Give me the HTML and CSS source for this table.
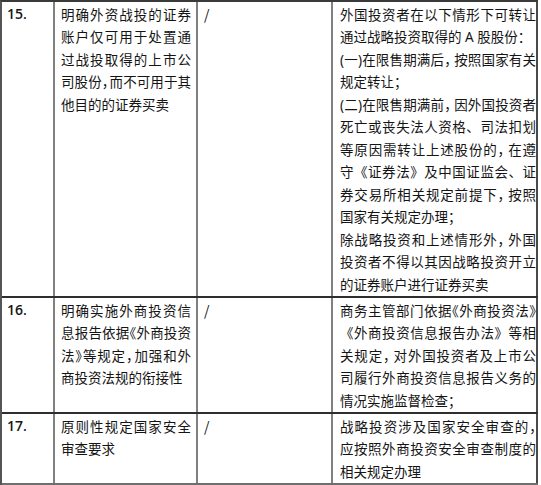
FILE: index.html
```html
<!DOCTYPE html>
<html lang="zh-CN">
<head>
<meta charset="utf-8">
<title>战略投资规定对照表</title>
<link rel="stylesheet" href="styles.css">
</head>
<body>
<div class="table">
  <div class="row">
    <div class="cell num">15.</div>
    <div class="cell desc">
      <span class="ln j">明确外资战投的证券</span>
      <span class="ln j">账户仅可用于处置通</span>
      <span class="ln j">过战投取得的上市公</span>
      <span class="ln j">司股份<span class="h c">，</span>而不可用于其</span>
      <span class="ln">他目的的证券买卖</span>
    </div>
    <div class="cell na">/</div>
    <div class="cell detail">
      <p class="para">
        <span class="ln j">外国投资者在以下情形下可转让</span>
        <span class="ln">通过战略投资取得的<span class="lat"> A </span>股股份<span class="h">：</span></span>
      </p>
      <p class="para">
        <span class="ln j"><span class="lat">(</span>一<span class="lat">)</span>在限售期满后<span class="h c">，</span>按照国家有关</span>
        <span class="ln">规定转让<span class="h">；</span></span>
      </p>
      <p class="para">
        <span class="ln j"><span class="lat">(</span>二<span class="lat">)</span>在限售期满前<span class="h c">，</span>因外国投资者</span>
        <span class="ln j">死亡或丧失法人资格、司法扣划</span>
        <span class="ln j">等原因需转让上述股份的<span class="h c">，</span>在遵</span>
        <span class="ln j">守《证券法》及中国证监会、证</span>
        <span class="ln j">券交易所相关规定前提下<span class="h c">，</span>按照</span>
        <span class="ln">国家有关规定办理<span class="h">；</span></span>
      </p>
      <p class="para">
        <span class="ln j">除战略投资和上述情形外<span class="h c">，</span>外国</span>
        <span class="ln j">投资者不得以其因战略投资开立</span>
        <span class="ln">的证券账户进行证券买卖</span>
      </p>
    </div>
  </div>
  <div class="row">
    <div class="cell num">16.</div>
    <div class="cell desc">
      <span class="ln j">明确实施外商投资信</span>
      <span class="ln j">息报告依据<span class="h">《</span>外商投资</span>
      <span class="ln j">法<span class="h">》</span>等规定<span class="h c">，</span>加强和外</span>
      <span class="ln">商投资法规的衔接性</span>
    </div>
    <div class="cell na">/</div>
    <div class="cell detail">
      <p class="para">
        <span class="ln j">商务主管部门依据<span class="h">《</span>外商投资法<span class="h">》</span></span>
        <span class="ln j">《外商投资信息报告办法》等相</span>
        <span class="ln j">关规定<span class="h c">，</span>对外国投资者及上市公</span>
        <span class="ln j">司履行外商投资信息报告义务的</span>
        <span class="ln">情况实施监督检查<span class="h">；</span></span>
      </p>
    </div>
  </div>
  <div class="row">
    <div class="cell num">17.</div>
    <div class="cell desc">
      <span class="ln j">原则性规定国家安全</span>
      <span class="ln">审查要求</span>
    </div>
    <div class="cell na">/</div>
    <div class="cell detail">
      <p class="para">
        <span class="ln j">战略投资涉及国家安全审查的<span class="h">，</span></span>
        <span class="ln j">应按照外商投资安全审查制度的</span>
        <span class="ln">相关规定办理</span>
      </p>
    </div>
  </div>
</div>
</body>
</html>
```
FILE: styles.css
```css
html, body {
  margin: 0;
  padding: 0;
  background: #ffffff;
}

body {
  font-family: "Noto Sans CJK SC", "Noto Sans", sans-serif;
  font-size: 13.5px;
  line-height: 22.5px;
  color: #141414;
}

.table {
  width: 536px;
  border-left: 2px solid #555555;
  border-top: 2px solid #3a3a3a;
}

.row {
  display: grid;
  grid-template-columns: 53px 143px 135px 205px;
  border-bottom: 2px solid #2e2e2e;
}

.row:last-child {
  border-bottom-color: #6e6e6e;
}

.cell {
  border-right: 2px solid #808080;
  box-sizing: border-box;
  padding-top: 0.5px;
  padding-bottom: 1px;
}

.cell.detail {
  border-right-color: #4a4a4a;
  padding-left: 7px;
}

.num {
  padding-left: 5px;
  font-family: "Open Sans", "Noto Sans", sans-serif;
  font-size: 14px;
  font-weight: 600;
  color: #161616;
}

.desc {
  padding-left: 6px;
  padding-right: 5px;
}

.na {
  padding-left: 6px;
  font-size: 14px;
}

.para {
  margin: 0;
}

.ln {
  display: block;
  height: 22.5px;
  line-height: 22.5px;
}

.ln.j {
  text-align: justify;
  text-align-last: justify;
}

.h {
  font-feature-settings: "halt";
}

.desc .h.c {
  margin-right: 1px;
}

.detail .h.c {
  margin-right: 3px;
}

.lat {
  font-family: "Noto Sans", sans-serif;
}
```
